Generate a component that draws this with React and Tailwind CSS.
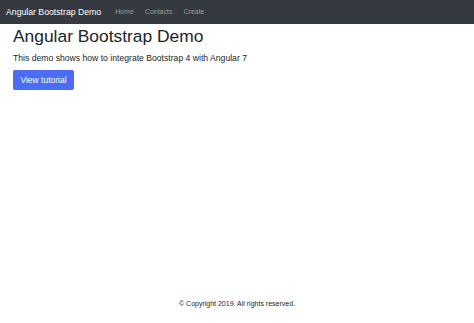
import React from 'react';

export default function App() {
    return (
        <div className="min-h-screen flex flex-col bg-white text-[#212529] font-['Liberation_Sans',Arial,sans-serif]">
            <nav className="h-[24px] flex items-center bg-[#343a40] px-[6px]">
                <span className="text-[8.7px] text-white leading-none">Angular Bootstrap Demo</span>
                <ul className="flex items-center gap-[11.5px] ml-[14px] text-[6.9px] text-[#9a9da0] leading-none">
                    <li>Home</li>
                    <li>Contacts</li>
                    <li>Create</li>
                </ul>
            </nav>

            <main className="flex-1 px-[13px]">
                <h1 className="mt-[1.5px] text-[17.4px] leading-[1.2]">Angular Bootstrap Demo</h1>
                <p className="mt-[6px] text-[8.65px] leading-[1.5]">
                    This demo shows how to integrate Bootstrap 4 with Angular 7
                </p>
                <button className="mt-[4.5px] h-[20px] w-[61px] rounded-[2px] bg-[#4a6cf7] text-white text-[8.5px] leading-none">
                    View tutorial
                </button>
            </main>

            <footer className="pb-[14px] text-center text-[7px] leading-[10px] text-[#212529]">
                © Copyright 2019. All rights reserved.
            </footer>
        </div>
    );
}
